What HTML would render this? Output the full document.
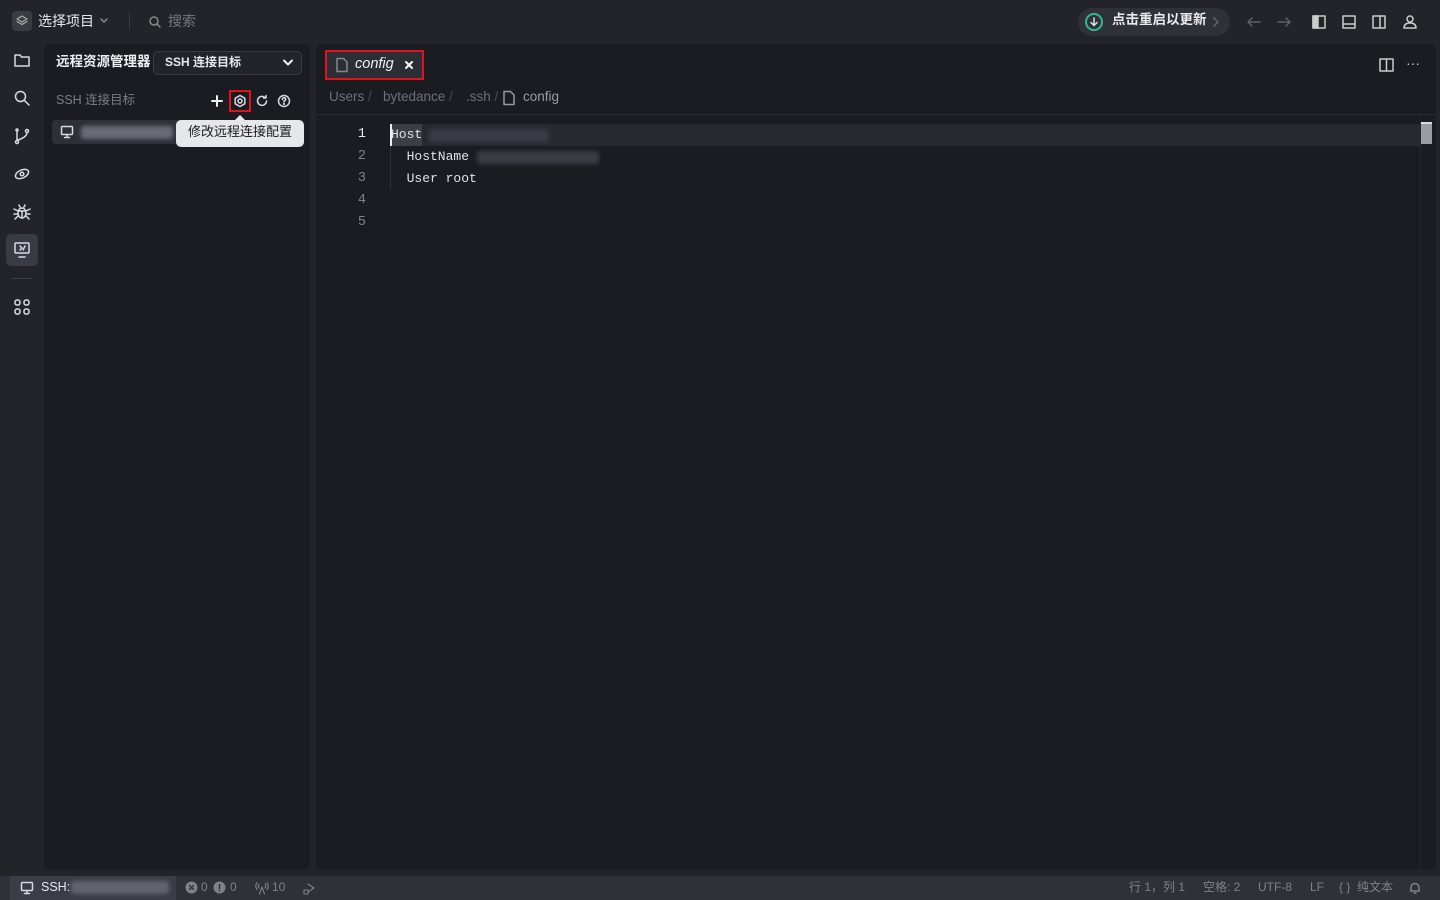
<!DOCTYPE html>
<html><head><meta charset="utf-8"><style>
*{margin:0;padding:0;box-sizing:border-box}
body{width:1440px;height:900px;background:#23242a;font-family:"Liberation Sans","Noto Sans CJK SC",sans-serif;color:#d0d2d8;position:relative;overflow:hidden;font-size:13px;line-height:1.2}
.abs{position:absolute}
svg{position:absolute;fill:none;stroke:#d8dae0;stroke-width:1.5;stroke-linecap:round;stroke-linejoin:round}
.panel{background:#1b1c21;border-radius:6px}
.mono{font-family:"Liberation Mono",monospace}
.blur{background:#3a3c44;filter:blur(2px);border-radius:3px}
.st{position:absolute;top:880px;font-size:12px;color:#80828a}
</style></head><body>
<!-- top bar -->
<div class="abs" style="left:12px;top:11px;width:20px;height:20px;background:#3a3c44;border-radius:4px"></div>
<svg style="left:15px;top:14px" width="14" height="14" viewBox="0 0 14 14"><path d="M7 2 L12 5 L7 8 L2 5Z M2 7.5 L7 10.5 L12 7.5" stroke="#aaa" stroke-width="1.2"/></svg>
<div class="abs" style="left:38px;top:13px;font-size:14px;color:#e6e8ec">选择项目</div>
<svg style="left:99px;top:17px" width="10" height="8" viewBox="0 0 10 8"><path d="M2 2 L5 5 L8 2" stroke="#888"/></svg>
<div class="abs" style="left:129px;top:12px;width:1px;height:18px;background:#3a3b42"></div>
<svg style="left:148px;top:15px" width="14" height="14" viewBox="0 0 14 14"><circle cx="6" cy="6" r="4" stroke="#888"/><path d="M9 9 L12 12" stroke="#888"/></svg>
<div class="abs" style="left:168px;top:13px;font-size:14px;color:#75777f">搜索</div>
<div class="abs" style="left:1078px;top:8px;width:152px;height:28px;background:#2f3138;border-radius:14px"></div>
<svg style="left:1084px;top:12px" width="20" height="20" viewBox="0 0 20 20"><circle cx="10" cy="10" r="8" stroke="#2fb889" stroke-width="2"/><path d="M10 6 V13 M7 10.5 L10 13.5 L13 10.5" stroke="#e0e0e0"/></svg>
<div class="abs" style="left:1112px;top:12px;font-size:13.5px;font-weight:bold;color:#e8eaee">点击重启以更新</div>
<svg style="left:1211px;top:16px" width="10" height="12" viewBox="0 0 10 12"><path d="M3 2 L7 6 L3 10" stroke="#666"/></svg>
<svg style="left:1246px;top:14px" width="16" height="16" viewBox="0 0 16 16"><path d="M14 8 H2 M6 4 L2 8 L6 12" stroke="#5e6068"/></svg>
<svg style="left:1276px;top:14px" width="16" height="16" viewBox="0 0 16 16"><path d="M2 8 H14 M10 4 L14 8 L10 12" stroke="#5e6068"/></svg>
<svg style="left:1311px;top:14px" width="16" height="16" viewBox="0 0 16 16"><rect x="2" y="2" width="12" height="12" stroke="#ccc"/><rect x="2" y="2" width="5" height="12" fill="#ccc" stroke="#ccc"/></svg>
<svg style="left:1341px;top:14px" width="16" height="16" viewBox="0 0 16 16"><rect x="2" y="2" width="12" height="12" stroke="#ccc"/><path d="M2 10 H14" stroke="#ccc"/></svg>
<svg style="left:1371px;top:14px" width="16" height="16" viewBox="0 0 16 16"><rect x="2" y="2" width="12" height="12" stroke="#ccc"/><path d="M9 2 V14" stroke="#ccc"/></svg>
<svg style="left:1401px;top:13px" width="18" height="18" viewBox="0 0 18 18"><circle cx="9" cy="6" r="3" stroke="#ccc"/><path d="M3 15 Q3 10 9 10 Q15 10 15 15 Z" stroke="#ccc"/></svg>

<!-- activity bar -->
<svg style="left:13px;top:51px" width="18" height="18" viewBox="0 0 18 18"><path d="M2 4 H7 L8.5 6 H16 V15 H2 Z"/></svg>
<svg style="left:13px;top:89px" width="18" height="18" viewBox="0 0 18 18"><circle cx="7.5" cy="7.5" r="5"/><path d="M11 11 L16 16"/></svg>
<svg style="left:13px;top:127px" width="18" height="18" viewBox="0 0 18 18"><circle cx="4" cy="15" r="1.5"/><circle cx="4" cy="3" r="1"/><circle cx="14" cy="4" r="1.5"/><path d="M4 4 V13.5 M14 5.5 Q14 10 5 13"/></svg>
<svg style="left:13px;top:165px" width="18" height="18" viewBox="0 0 18 18"><ellipse cx="9" cy="9" rx="7" ry="4" transform="rotate(-25 9 9)"/><circle cx="9" cy="9" r="1.8"/></svg>
<svg style="left:13px;top:203px" width="18" height="18" viewBox="0 0 18 18"><ellipse cx="9" cy="10" rx="4" ry="5"/><path d="M5 8 H13 M9 8 V15 M1 6 L5 8 M17 6 L13 8 M1 11 H5 M17 11 H13 M2 16 L5 13 M16 16 L13 13 M7 4 L6 2 M11 4 L12 2"/></svg>
<div class="abs" style="left:6px;top:234px;width:32px;height:32px;background:#383a44;border-radius:5px"></div>
<svg style="left:13px;top:241px" width="18" height="18" viewBox="0 0 18 18"><rect x="2" y="2" width="14" height="10" rx="1"/><path d="M6 16 H12 M7 5 L9 7 L7 9 M10 9 L12 5"/></svg>
<div class="abs" style="left:12px;top:278px;width:20px;height:1px;background:#3e4048"></div>
<svg style="left:13px;top:298px" width="18" height="18" viewBox="0 0 18 18"><rect x="2" y="2" width="5" height="5" rx="2"/><rect x="11" y="2" width="5" height="5" rx="2"/><rect x="2" y="11" width="5" height="5" rx="2"/><rect x="11" y="11" width="5" height="5" rx="2"/></svg>

<!-- sidebar -->
<div class="abs panel" style="left:44px;top:44px;width:266px;height:826px"></div>
<div class="abs" style="left:56px;top:54px;font-size:13.5px;font-weight:bold;color:#eceef2">远程资源管理器</div>
<div class="abs" style="left:153px;top:51px;width:149px;height:24px;border:1px solid #3a3c44;border-radius:5px;background:#23242a"></div>
<div class="abs" style="left:165px;top:55px;font-size:12px;font-weight:bold;color:#e6e8ec">SSH 连接目标</div>
<svg style="left:282px;top:58px" width="12" height="10" viewBox="0 0 12 10"><path d="M2 2.5 L6 6.5 L10 2.5" stroke="#eee" stroke-width="2"/></svg>
<div class="abs" style="left:56px;top:93px;font-size:12.5px;color:#7c7e86">SSH 连接目标</div>
<svg style="left:211px;top:95px" width="12" height="12" viewBox="0 0 12 12"><path d="M6 1 V11 M1 6 H11" stroke="#eee" stroke-width="2"/></svg>
<div class="abs" style="left:229px;top:90px;width:22px;height:22px;border:2px solid #e0141e"></div>
<svg style="left:233px;top:94px" width="14" height="14" viewBox="0 0 14 14"><circle cx="7" cy="7" r="2"/><path d="M7 1.5 L11.8 4.2 V9.8 L7 12.5 L2.2 9.8 V4.2 Z"/></svg>
<svg style="left:255px;top:94px" width="14" height="14" viewBox="0 0 14 14"><path d="M11.5 7 A4.5 4.5 0 1 1 10 3.5 M11 1.5 V4 H8.5"/></svg>
<svg style="left:277px;top:94px" width="14" height="14" viewBox="0 0 14 14"><circle cx="7" cy="7" r="5.5"/><path d="M5.3 5.5 Q5.5 3.8 7 3.8 Q8.7 3.8 8.7 5.3 Q8.7 6.5 7 7 V8"/><circle cx="7" cy="10" r=".4"/></svg>
<div class="abs" style="left:52px;top:120px;width:128px;height:24px;background:#2e3038;border-radius:4px"></div>
<svg style="left:60px;top:125px" width="14" height="14" viewBox="0 0 14 14"><rect x="1.5" y="1.5" width="11" height="8" rx="1"/><path d="M7 9.5 V12 M4.5 12.5 H9.5"/></svg>
<div class="abs blur" style="left:81px;top:126px;width:92px;height:13px;background:#6a6c74"></div>
<div class="abs" style="left:176px;top:120px;width:128px;height:27px;background:#e6e7ea;border-radius:5px"></div>
<div class="abs" style="left:235px;top:115px;width:0;height:0;border-left:5px solid transparent;border-right:5px solid transparent;border-bottom:5px solid #e6e7ea"></div>
<div class="abs" style="left:188px;top:124px;font-size:13px;color:#1a1b1f">修改远程连接配置</div>

<!-- editor -->
<div class="abs panel" style="left:316px;top:44px;width:1120px;height:826px"></div>
<div class="abs" style="left:316px;top:114px;width:1120px;height:1px;background:#2a2b31"></div>
<div class="abs" style="left:325px;top:50px;width:99px;height:30px;background:#2c2e35;border:2px solid #e0141e"></div>
<svg style="left:335px;top:57px" width="14" height="16" viewBox="0 0 14 16"><path d="M2 1.5 H8.5 L12 5 V14.5 H2 Z" stroke="#888"/></svg>
<div class="abs" style="left:355px;top:56px;font-size:14.5px;font-style:italic;color:#f0f1f4">config</div>
<svg style="left:403px;top:59px" width="12" height="12" viewBox="0 0 12 12"><path d="M3 3 L9 9 M9 3 L3 9" stroke="#fff" stroke-width="2"/></svg>
<svg style="left:1378px;top:56px" width="18" height="18" viewBox="0 0 18 18"><rect x="2" y="3" width="13" height="12" stroke="#ccc"/><path d="M8.5 3 V15" stroke="#ccc"/></svg>
<div class="abs" style="left:1406px;top:55px;font-size:14px;color:#ccc">···</div>
<div class="abs" style="left:329px;top:89px;font-size:13.5px;color:#6e7078">Users <span style="color:#4a4c54">/</span></div>
<div class="abs" style="left:383px;top:89px;font-size:13.5px;color:#6e7078">bytedance <span style="color:#4a4c54">/</span></div>
<div class="abs" style="left:466px;top:89px;font-size:13.5px;color:#6e7078">.ssh <span style="color:#4a4c54">/</span></div>
<svg style="left:502px;top:90px" width="14" height="16" viewBox="0 0 14 16"><path d="M2 1.5 H8.5 L12 5 V14.5 H2 Z" stroke="#999"/></svg>
<div class="abs" style="left:523px;top:89px;font-size:13.5px;color:#9a9ca4">config</div>

<div class="abs" style="left:390px;top:124px;width:1030px;height:22px;background:#272930"></div>
<div class="abs" style="left:390px;top:124px;width:2px;height:22px;background:#eee"></div>
<div class="abs" style="left:392px;top:124px;width:30px;height:22px;background:#3c3e46"></div>
<div class="abs" style="left:390px;top:146px;width:1px;height:44px;background:#2e3036"></div>
<div class="abs" style="left:1420px;top:122px;width:12px;height:22px;background:#9a9ca2;border-top:2px solid #ddd"></div>
<div class="abs" style="left:1420px;top:116px;width:1px;height:754px;background:#26272d"></div>
<div class="abs mono" style="left:340px;top:124px;width:26px;text-align:right;font-size:13.5px;line-height:22px;color:#7e8088"><div style="color:#e6e8ec">1</div><div>2</div><div>3</div><div>4</div><div>5</div></div>
<div class="abs mono" style="left:391px;top:124px;font-size:13px;line-height:22px;color:#e0e2e6;white-space:pre"><div>Host</div><div>  HostName</div><div>  User root</div></div>
<div class="abs blur" style="left:429px;top:129px;width:120px;height:13px"></div>
<div class="abs blur" style="left:477px;top:151px;width:122px;height:13px"></div>

<!-- status bar -->
<div class="abs" style="left:0;top:876px;width:1440px;height:24px;background:#2f3139"></div>
<div class="abs" style="left:10px;top:876px;width:166px;height:24px;background:#3b3d46"></div>
<svg style="left:20px;top:881px" width="14" height="14" viewBox="0 0 14 14"><rect x="1.5" y="1.5" width="11" height="8" rx="1"/><path d="M7 9.5 V12 M4.5 12.5 H9.5"/></svg>
<div class="abs" style="left:41px;top:880px;font-size:12.5px;color:#e6e8ec">SSH:</div>
<div class="abs blur" style="left:71px;top:881px;width:98px;height:13px;background:#62646c"></div>
<svg style="left:185px;top:881px" width="13" height="13" viewBox="0 0 13 13"><circle cx="6.5" cy="6.5" r="6" fill="#80828a" stroke="none"/><path d="M4.5 4.5 L8.5 8.5 M8.5 4.5 L4.5 8.5" stroke="#2f3139" stroke-width="1.3"/></svg>
<div class="st" style="left:201px">0</div>
<svg style="left:213px;top:881px" width="13" height="13" viewBox="0 0 13 13"><circle cx="6.5" cy="6.5" r="6" fill="#80828a" stroke="none"/><path d="M6.5 3.5 V7.5 M6.5 9.5 V9.6" stroke="#2f3139" stroke-width="1.5"/></svg>
<div class="st" style="left:230px">0</div>
<svg style="left:255px;top:881px" width="14" height="14" viewBox="0 0 14 14"><path d="M7 6 L4.5 13 M7 6 L9.5 13 M4 3 Q2.5 5 4 7 M10 3 Q11.5 5 10 7 M2 1.5 Q-0.5 5 2 8.5 M12 1.5 Q14.5 5 12 8.5" stroke="#80828a" stroke-width="1.1"/></svg>
<div class="st" style="left:272px">10</div>
<svg style="left:302px;top:881px" width="14" height="14" viewBox="0 0 14 14"><path d="M6 3 L12 7 L6 11 M2 9 H6 V13 H2 Z" stroke="#80828a" stroke-width="1.1"/></svg>
<div class="st" style="left:1129px">行 1，列 1</div>
<div class="st" style="left:1203px">空格: 2</div>
<div class="st" style="left:1258px">UTF-8</div>
<div class="st" style="left:1310px">LF</div>
<div class="st" style="left:1339px">{ }</div>
<div class="st" style="left:1357px">纯文本</div>
<svg style="left:1408px;top:881px" width="14" height="14" viewBox="0 0 14 14"><path d="M3 10 V6.5 A4 4 0 0 1 11 6.5 V10 H2.5 H11.5 M6 12 H8" stroke="#80828a"/></svg>
</body></html>
